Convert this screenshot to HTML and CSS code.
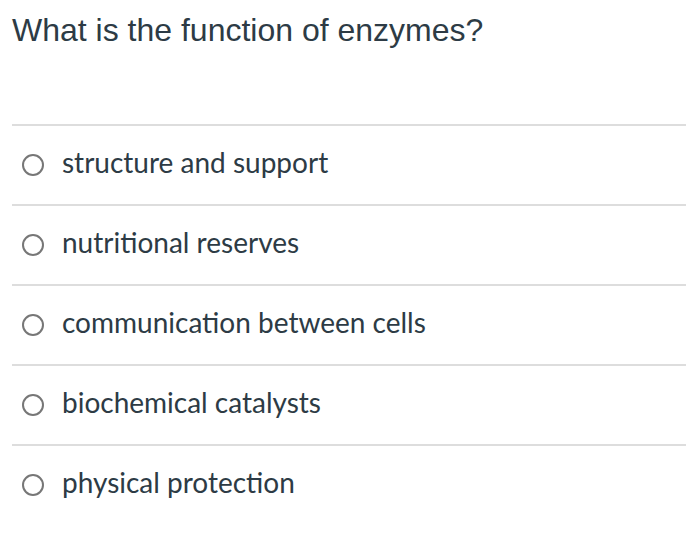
FILE: index.html
```html
<!DOCTYPE html>
<html>
<head>
<meta charset="utf-8">
<link rel="stylesheet" href="styles.css">
</head>
<body>
<div class="quiz">
  <div class="question">What is the function of enzymes?</div>
  <div class="answers">
    <label class="answer"><span class="radio"></span><span class="text">structure and support</span></label>
    <label class="answer"><span class="radio"></span><span class="text">nutritional reserves</span></label>
    <label class="answer"><span class="radio"></span><span class="text">communication between cells</span></label>
    <label class="answer"><span class="radio"></span><span class="text">biochemical catalysts</span></label>
    <label class="answer"><span class="radio"></span><span class="text">physical protection</span></label>
  </div>
</div>
</body>
</html>
```
FILE: styles.css
```css
html, body {
  margin: 0;
  padding: 0;
  background: #ffffff;
}
.quiz {
  padding-left: 12px;
  color: #2d3b45;
}
.question {
  font-family: "Liberation Sans", Arial, sans-serif;
  font-size: 32px;
  line-height: 36px;
  padding-top: 12px;
  height: 124px;
  box-sizing: border-box;
}
.answers {
  display: flex;
  flex-direction: column;
}
.answer {
  display: flex;
  align-items: center;
  height: 80px;
  border-top: 2px solid #dddddd;
  box-sizing: border-box;
  font-family: Lato, "Noto Sans", sans-serif;
  font-size: 28px;
}
.radio {
  width: 18px;
  height: 18px;
  border: 2px solid #777777;
  border-radius: 50%;
  margin-left: 10px;
  margin-right: 18px;
  flex: none;
}
.text {
  line-height: 34px;
  margin-bottom: 6px;
}
```
